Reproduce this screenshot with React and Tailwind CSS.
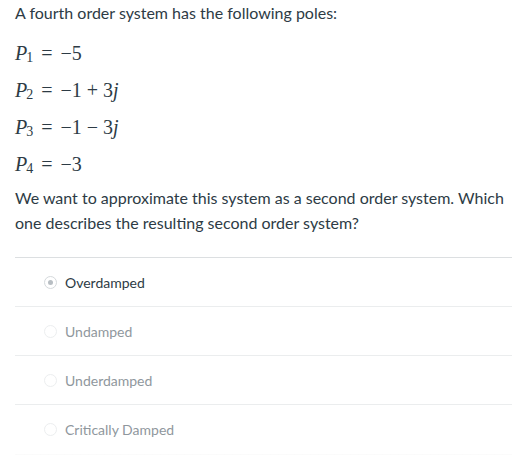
import React from "react";

const lato = { fontFamily: "Lato, 'Open Sans', sans-serif" };

function MathLine({ sub, children }) {
  return (
    <div className="h-[37px] flex items-center text-[20px] text-[#2d3b45]" style={{ fontFamily: "'Liberation Serif', 'DejaVu Serif', serif" }}>
      <span className="italic">P</span>
      <span className="text-[14px] relative top-[5px] -ml-[1px]">{sub}</span>
      <span className="ml-[8px] mr-[8px]">=</span>
      {children}
    </div>
  );
}

function Radio({ checked }) {
  return (
    <span className={"w-[13px] h-[13px] rounded-full border flex items-center justify-center " + (checked ? "border-[#d5d9dc] bg-white" : "border-[#eceeef] bg-white")}>
      {checked && <span className="w-[5px] h-[5px] rounded-full bg-[#b8bec3]" />}
    </span>
  );
}

function Option({ label, checked, last }) {
  return (
    <div className={"h-[49px] flex items-center pl-[29px] " + (last ? "" : "border-b border-[#ebedee]")}>
      <Radio checked={checked} />
      <span className={"ml-[8px] text-[14px] " + (checked ? "text-[#2d3b45]" : "text-[#8f979d]")}>{label}</span>
    </div>
  );
}

export default function App() {
  return (
    <div className="w-[512px] h-[455px] bg-white overflow-hidden flex flex-col" style={lato}>
      <div className="pl-[15px] pt-[1px]">
        <p className="text-[16px] leading-[24px] text-[#2d3b45]">A fourth order system has the following poles:</p>
        <div className="mt-[9px]">
          <MathLine sub="1"><span>−5</span></MathLine>
          <MathLine sub="2"><span>−1 + 3</span><span className="italic">j</span></MathLine>
          <MathLine sub="3"><span>−1 − 3</span><span className="italic">j</span></MathLine>
          <MathLine sub="4"><span>−3</span></MathLine>
        </div>
        <p className="mt-[3px] text-[16px] leading-[25px] text-[#2d3b45] pr-[4px]">
          We want to approximate this system as a second order system. Which one describes the resulting second order system?
        </p>
      </div>
      <div className="ml-[15px] mt-[22px] border-t border-[#dcdfe1]">
        <Option label="Overdamped" checked />
        <Option label="Undamped" />
        <Option label="Underdamped" />
        <Option label="Critically Damped" last />
      </div>
      <div className="ml-[15px] flex-1 bg-gradient-to-b from-white to-[#f7f7f7]" />
    </div>
  );
}
